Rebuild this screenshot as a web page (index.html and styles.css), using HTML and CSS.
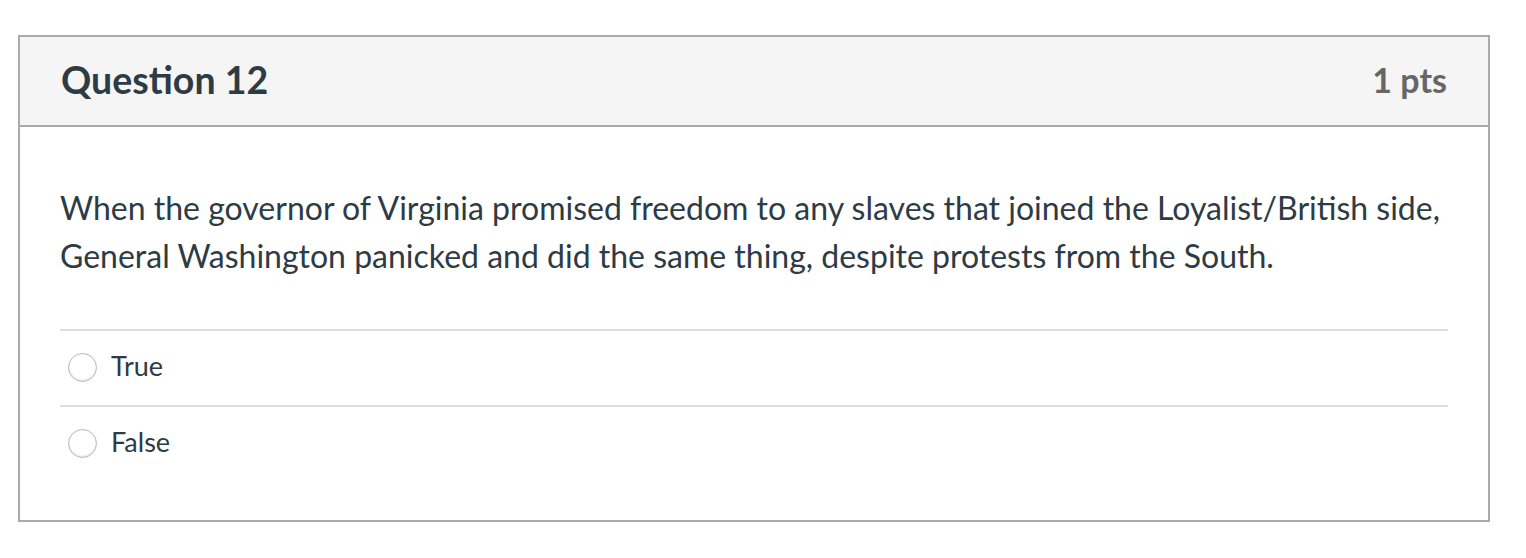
FILE: index.html
```html
<!DOCTYPE html>
<html>
<head>
<meta charset="utf-8">
<link rel="stylesheet" href="styles.css">
</head>
<body>
<div class="question">
  <div class="header">
    <h2 class="title">Question 12</h2>
    <span class="pts">1 pts</span>
  </div>
  <div class="content">
    <p class="text">When the governor of Virginia promised freedom to any slaves that joined the Loyalist/British side, General Washington panicked and did the same thing, despite protests from the South.</p>
    <div class="answers">
      <label class="answer"><span class="radio"></span><span class="label">True</span></label>
      <label class="answer"><span class="radio"></span><span class="label">False</span></label>
    </div>
  </div>
</div>
</body>
</html>
```
FILE: styles.css
```css
* { box-sizing: border-box; }
html, body { margin: 0; padding: 0; background: #fff; }
body { font-family: Lato, "Open Sans", sans-serif; color: #2d3b45; }
.question {
  margin: 35px 0 0 18px;
  width: 1472px;
  height: 487px;
  border: 2px solid #aaaaaa;
}
.header {
  height: 90px;
  background: #f5f5f5;
  border-bottom: 2px solid #aaaaaa;
  display: flex;
  align-items: center;
  justify-content: space-between;
  padding: 0 41px 3px 41px;
}
.title {
  margin: 0;
  font-size: 37.5px;
  font-weight: 700;
  color: #2d3b45;
}
.pts {
  font-size: 34px;
  font-weight: 700;
  color: #666666;
}
.content {
  padding: 57px 40px 0 40px;
}
.text {
  margin: 0;
  font-size: 32px;
  line-height: 48px;
}
.answers {
  margin-top: 49px;
}
.answer {
  display: flex;
  align-items: center;
  height: 76px;
  border-top: 2px solid #dddddd;
  padding-left: 8px;
}
.radio {
  width: 29px;
  height: 29px;
  border-radius: 50%;
  border: 1px solid #b8b8b8;
  box-shadow: inset 0 -1px 2px rgba(0,0,0,0.12);
  background: #fff;
  margin-right: 14px;
  margin-bottom: 2px;
}
.label {
  font-size: 27px;
  margin-bottom: 6px;
}
```
